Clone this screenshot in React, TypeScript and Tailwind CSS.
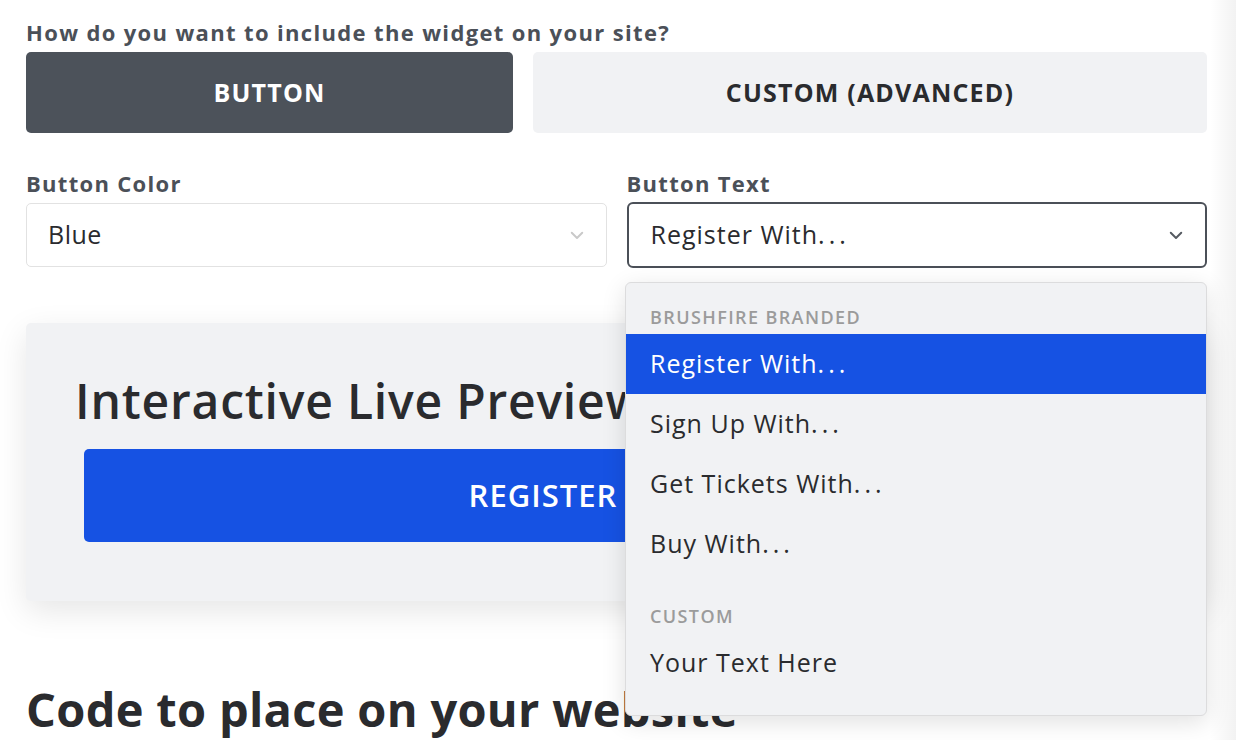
import React from "react";

function Chevron({ className }: { className?: string }) {
  return (
    <svg width="18" height="18" viewBox="0 0 24 24" fill="none" className={className}>
      <path d="M5 9l7 7 7-7" stroke="currentColor" strokeWidth="2.6" strokeLinecap="round" strokeLinejoin="round" />
    </svg>
  );
}

function Dots({ text }: { text: string }) {
  const base = text.replace("...", "");
  return (
    <span>
      {base}
      <span className="tracking-[4px]">...</span>
    </span>
  );
}

export default function App() {
  const items = ["Register With...", "Sign Up With...", "Get Tickets With...", "Buy With..."];
  return (
    <div
      className="relative w-[1236px] h-[740px] overflow-hidden bg-white text-[#2a2b2e]"
      style={{ fontFamily: '"Open Sans", "Noto Sans", sans-serif' }}
    >
      <div className="absolute right-0 top-0 h-full w-[26px] bg-gradient-to-r from-transparent to-[rgba(0,0,0,0.05)]" />
      <div className="pl-[26px] w-[1207px] pt-[18px]">
        <h2 className="text-[22px] leading-[28px] font-bold text-[#4b5058] tracking-[1.35px]">
          How do you want to include the widget on your site?
        </h2>
        <div className="mt-[6px] flex gap-[20px]">
          <div className="w-[487px] h-[81px] rounded-[5px] bg-[#4c525a] flex items-center justify-center text-white text-[25px] font-bold tracking-[1.2px]">
            BUTTON
          </div>
          <div className="flex-1 h-[81px] rounded-[5px] bg-[#f1f2f4] flex items-center justify-center text-[#2a2b2e] text-[25px] font-bold tracking-[1.2px]">
            CUSTOM (ADVANCED)
          </div>
        </div>
        <div className="mt-[36px] grid grid-cols-2 gap-[20px]">
          <div>
            <div className="h-[28px] leading-[28px] text-[22px] font-bold text-[#4b5058] tracking-[1.3px]">Button Color</div>
            <div className="mt-[6px] h-[64px] rounded-[5px] border-[1.5px] border-[#e2e2e2] bg-white flex items-center justify-between pl-[21px] pr-[20px]">
              <span className="text-[25px] tracking-[0.5px]">Blue</span>
              <Chevron className="text-[#c9c9c9]" />
            </div>
          </div>
          <div className="relative">
            <div className="h-[28px] leading-[28px] text-[22px] font-bold text-[#4b5058] tracking-[1.3px]">Button Text</div>
            <div className="mt-[5px] h-[66px] rounded-[6px] border-2 border-[#4b5058] bg-white flex items-center justify-between pl-[22px] pr-[20px]">
              <span className="text-[25px] tracking-[1px]">
                <Dots text="Register With..." />
              </span>
              <Chevron className="text-[#555a61]" />
            </div>
          </div>
        </div>

        <div className="mt-[55px] h-[278px] rounded-[5px] bg-[#f1f2f4] shadow-[0_10px_32px_rgba(0,0,0,0.1)] pl-[49px] pr-[84px] pt-[52px]">
          <div className="text-[48px] leading-[52px] font-semibold text-[#2a2b2e] tracking-[0.8px] whitespace-nowrap">Interactive Live Preview</div>
          <div className="mt-[22px] ml-[9px] h-[93px] rounded-[5px] bg-[#1652e3] flex items-center justify-center text-white text-[31px] font-semibold tracking-[1px]">
            REGISTER WITH...
          </div>
        </div>

        <div className="mt-[82px] text-[47px] leading-[52px] font-bold text-[#2a2b2e] tracking-[0.3px]">Code to place on your website</div>
      </div>

      <div className="absolute left-[625px] top-[282px] w-[582px] h-[434px] rounded-[6px] border-[1.5px] border-[#dcdcdd] bg-[#f1f2f4] shadow-[0_6px_24px_rgba(0,0,0,0.12)] pt-[18px]">
        <div className="h-[33px] leading-[33px] pl-[24px] text-[18px] font-semibold text-[#9b9b9b] tracking-[1.4px]">
          BRUSHFIRE BRANDED
        </div>
        {items.map((t, i) => (
          <div
            key={t}
            className={
              i === 0
                ? "h-[60px] flex items-center pl-[24px] text-[25px] tracking-[1px] bg-[#1652e3] text-white"
                : "h-[60px] flex items-center pl-[24px] text-[25px] tracking-[1px] text-[#2a2b2e]"
            }
          >
            <Dots text={t} />
          </div>
        ))}
        <div className="mt-[26px] h-[33px] leading-[33px] pl-[24px] text-[18px] font-semibold text-[#9b9b9b] tracking-[1.4px]">
          CUSTOM
        </div>
        <div className="h-[60px] flex items-center pl-[24px] text-[25px] tracking-[1px] text-[#2a2b2e]">Your Text Here</div>
      </div>
    </div>
  );
}
